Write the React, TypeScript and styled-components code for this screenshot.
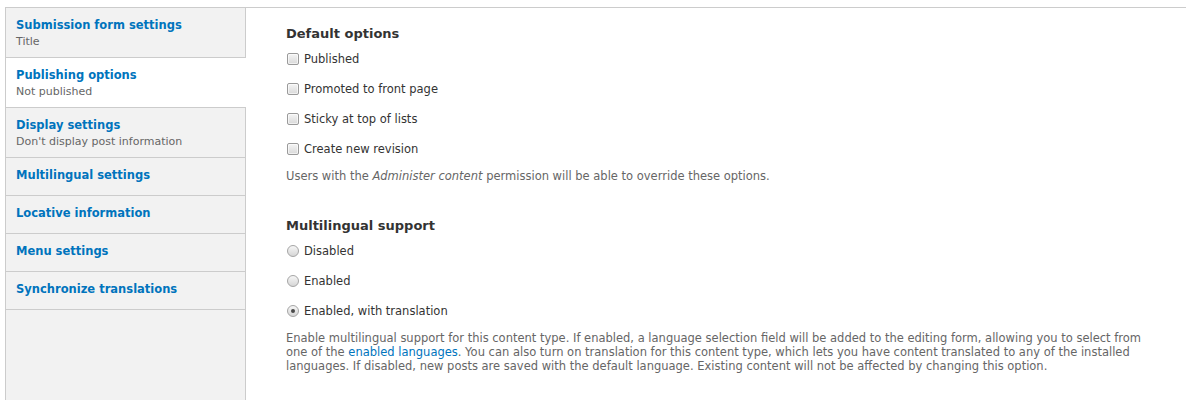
import React, { useState } from "react";
import styled, { createGlobalStyle } from "styled-components";

const GlobalStyle = createGlobalStyle`
  html, body {
    margin: 0;
    background: #fff;
  }
  body {
    font-family: "DejaVu Sans", Verdana, sans-serif;
    font-size: 11.5px;
    color: #333;
  }
`;

const BORDER = "#cccccc";
const LINK = "#0074bd";

const Page = styled.div`
  display: flex;
  align-items: stretch;
  min-height: 100vh;
  padding: 7px 0 0 5px;
  box-sizing: border-box;
`;

const TabList = styled.ul`
  list-style: none;
  margin: 0;
  padding: 0;
  width: 241px;
  flex-shrink: 0;
  box-sizing: border-box;
  border: 1px solid ${BORDER};
  border-bottom: none;
  background: #f2f2f2;
`;

const TabItem = styled.li<{ $active: boolean }>`
  padding: 8px 10px 11px;
  border-bottom: 1px solid ${BORDER};
  background: ${(p) => (p.$active ? "#fff" : "transparent")};
  margin-right: ${(p) => (p.$active ? "-1px" : "0")};
  cursor: pointer;
`;

const TabTitle = styled.a`
  display: block;
  font-weight: bold;
  font-size: 11.5px;
  line-height: 18px;
  color: ${LINK};
  text-decoration: none;
`;

const TabSummary = styled.span`
  display: block;
  margin: 2px 0 -2px;
  font-size: 11px;
  line-height: 12px;
  color: #666;
`;

const Content = styled.div`
  flex: 1;
  border-top: 1px solid ${BORDER};
  padding: 0 40px;
`;

const Section = styled.div<{ $gap: number }>`
  margin-top: ${(p) => p.$gap}px;
`;

const Heading = styled.h3`
  margin: 0 0 1px;
  font-size: 13px;
  line-height: 18px;
  font-weight: bold;
  color: #333;
`;

const OptionRow = styled.label`
  display: flex;
  align-items: center;
  gap: 5px;
  height: 30px;
  color: #333;
`;

const Check = styled.input`
  appearance: none;
  margin: 0 0 0 1px;
  width: 12px;
  height: 12px;
  box-sizing: border-box;
  border: 1px solid #9a9a9a;
  border-radius: 2px;
  background: linear-gradient(#f4f4f4, #d9d9d9);
  box-shadow: inset 0 0 0 1px rgba(255, 255, 255, 0.6);
`;

const Radio = styled.input`
  appearance: none;
  margin: 0 0 0 1px;
  width: 12px;
  height: 12px;
  box-sizing: border-box;
  border: 1px solid #a5a5a5;
  border-radius: 50%;
  background: linear-gradient(#f6f6f6, #d6d6d6);
  display: grid;
  place-items: center;

  &:checked::after {
    content: "";
    width: 4px;
    height: 4px;
    border-radius: 50%;
    background: #4a4a4a;
  }
`;

const Description = styled.div<{ $top: number }>`
  margin-top: ${(p) => p.$top}px;
  font-size: 11.5px;
  line-height: 14px;
  color: #666;

  em {
    font-style: italic;
  }
  a {
    display: inline-block;
    line-height: 14px;
    color: ${LINK};
    text-decoration: none;
  }
`;

type Tab = { title: string; summary?: string };

const tabs: Tab[] = [
  { title: "Submission form settings", summary: "Title" },
  { title: "Publishing options", summary: "Not published" },
  { title: "Display settings", summary: "Don't display post information" },
  { title: "Multilingual settings" },
  { title: "Locative information" },
  { title: "Menu settings" },
  { title: "Synchronize translations" },
];

const defaultOptions = ["Published", "Promoted to front page", "Sticky at top of lists", "Create new revision"];
const multilingual = ["Disabled", "Enabled", "Enabled, with translation"];

const App: React.FC = () => {
  const [active, setActive] = useState(1);
  const [lang, setLang] = useState(2);
  const [checks, setChecks] = useState<boolean[]>([false, false, false, false]);

  return (
    <>
      <GlobalStyle />
      <Page>
        <TabList>
          {tabs.map((t, i) => (
            <TabItem key={t.title} $active={active === i} onClick={() => setActive(i)}>
              <TabTitle href="#" onClick={(e) => e.preventDefault()}>
                {t.title}
              </TabTitle>
              {t.summary && <TabSummary>{t.summary}</TabSummary>}
            </TabItem>
          ))}
        </TabList>

        <Content>
          <Section $gap={17}>
            <Heading>Default options</Heading>
            {defaultOptions.map((o, i) => (
              <OptionRow key={o}>
                <Check
                  type="checkbox"
                  checked={checks[i]}
                  onChange={() => setChecks((prev) => prev.map((v, j) => (j === i ? !v : v)))}
                />
                {o}
              </OptionRow>
            ))}
            <Description $top={5}>
              Users with the <em>Administer content</em> permission will be able to override these options.
            </Description>
          </Section>

          <Section $gap={34}>
            <Heading>Multilingual support</Heading>
            {multilingual.map((o, i) => (
              <OptionRow key={o}>
                <Radio type="radio" name="language" checked={lang === i} onChange={() => setLang(i)} />
                {o}
              </OptionRow>
            ))}
            <Description $top={5}>
              Enable multilingual support for this content type. If enabled, a language selection field will be added
              to the editing form, allowing you to select from one of the <a href="#">enabled languages</a>. You can
              also turn on translation for this content type, which lets you have content translated to any of the
              installed languages. If disabled, new posts are saved with the default language. Existing content will
              not be affected by changing this option.
            </Description>
          </Section>
        </Content>
      </Page>
    </>
  );
};

export default App;
